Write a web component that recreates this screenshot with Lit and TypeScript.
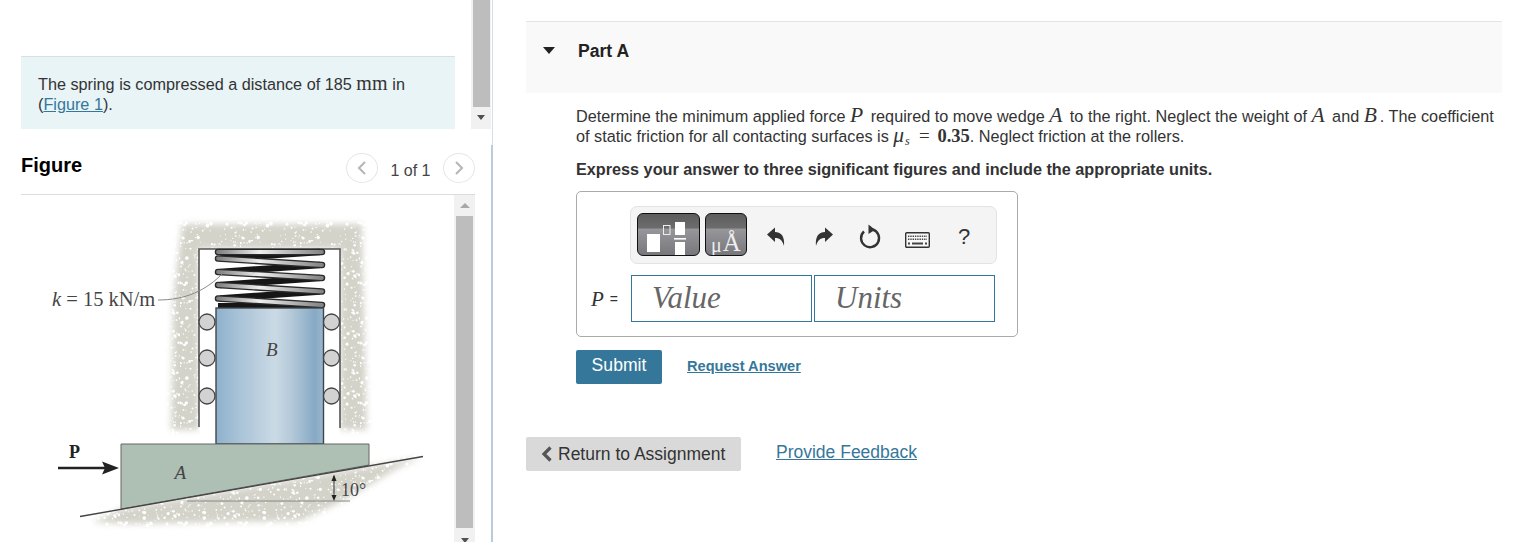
import { LitElement, html, css, svg } from "lit";
import { customElement } from "lit/decorators.js";

function makeDots() {
  let seed = 12345;
  const r = () => {
    seed = (seed * 16807) % 2147483647;
    return seed / 2147483647;
  };
  const out: { x: number; y: number; r: number }[] = [];
  for (let i = 0; i < 150; i++) {
    out.push({ x: +(r() * 60).toFixed(1), y: +(r() * 60).toFixed(1), r: +(0.5 + r() * r() * 1.5).toFixed(2) });
  }
  return out;
}
const DOTS = makeDots();
const ROLLER_Y = [322, 358, 396];
const BARS = [
  [218, 252, 322, 252],
  [218, 258.5, 322, 265],
  [218, 272, 322, 278],
  [218, 285, 322, 291.5],
  [218, 298.5, 322, 305],
];
const BACK = [
  [220, 258.5, 320, 252],
  [220, 272, 320, 265],
  [220, 285, 320, 278],
  [220, 298.5, 320, 291.5],
];

@customElement("app-root")
export class AppRoot extends LitElement {
  static styles = css`
    :host {
      display: block;
      width: 1516px;
      height: 542px;
      overflow: hidden;
      background: #fff;
      font-family: "Liberation Sans", Arial, sans-serif;
      font-size: 16.23px;
      line-height: 20px;
      color: #333;
    }
    .page { display: flex; height: 542px; }
    .left { width: 493px; flex: none; display: flex; flex-direction: column; }
    .top-pane {
      height: 145px;
      flex: none;
      display: flex;
      align-items: flex-start;
      border-right: 1px solid #d6e0ea;
      box-sizing: border-box;
    }
    .top-content { width: 471px; flex: none; padding: 56px 0 0 21px; box-sizing: border-box; }
    .prompt {
      width: 434px;
      height: 73px;
      box-sizing: border-box;
      background: #e9f4f7;
      border-top: 1px solid #d9dfe2;
      padding: 17px 17px 0;
    }
    a { color: #35779a; text-decoration: underline; }
    .mm { font-family: "Liberation Serif", "Times New Roman", serif; font-size: 20px; line-height: 0; letter-spacing: 0.2px; }
    .sb {
      background: #f1f1f1;
      display: flex;
      flex-direction: column;
      align-items: center;
      box-sizing: border-box;
    }
    .sb-top { width: 20px; height: 129px; flex: none; }
    .sb-top .thumb { width: 17px; height: 107px; background: #bdbdbd; flex: none; }
    .sb-arrow-down { width: 0; height: 0; border-left: 4.5px solid transparent; border-right: 4.5px solid transparent; border-top: 5px solid #505050; }
    .sb-arrow-up { width: 0; height: 0; border-left: 5px solid transparent; border-right: 5px solid transparent; border-bottom: 5px solid #a8a8a8; }
    .sb-top .sb-arrow-down { margin-top: 8px; }

    .fig-pane {
      flex: 1;
      border-right: 2px solid #b9cbdf;
      box-sizing: border-box;
      padding-left: 21px;
      display: flex;
      flex-direction: column;
      min-height: 0;
    }
    .fig-head {
      width: 454px;
      height: 50px;
      flex: none;
      box-sizing: border-box;
      border-bottom: 1px solid #dcdcdc;
      display: flex;
      align-items: flex-start;
      padding-top: 8px;
    }
    .fig-title { font-size: 20px; font-weight: bold; color: #000; line-height: 24px; flex: 1; }
    .circle {
      width: 32px;
      height: 30px;
      box-sizing: border-box;
      border: 1px solid #e6e6e6;
      border-radius: 50%;
      display: flex;
      align-items: center;
      justify-content: center;
      background: #fff;
      flex: none;
    }
    .circle svg { display: block; }
    .pager-text { width: 65px; text-align: center; line-height: 20px; margin-top: 8px; color: #444; flex: none; font-size: 16px; }
    .fig-body { display: flex; width: 454px; flex: 1; min-height: 0; }
    .fig-svg { width: 433px; height: 347px; display: block; flex: none; }
    .sb-fig { width: 21px; height: 347px; flex: none; }
    .sb-fig .sb-arrow-up { margin-top: 8px; }
    .sb-fig .thumb { width: 17px; height: 312px; background: #bdbdbd; margin-top: 8px; flex: none; }
    .sb-fig .sb-arrow-down { margin-top: 10px; }

    .fl-a { font: italic 19px "Liberation Serif", serif; fill: #444; }
    .fl-k { font: 20.5px "Liberation Serif", serif; fill: #444; }
    .fl-ki { font-style: italic; }
    .fl-p { font: bold 18px "Liberation Serif", serif; fill: #222; }
    .fl-d { font: 18px "Liberation Serif", serif; fill: #444; }

    .right { margin-left: 33px; width: 976px; flex: none; }
    .part-head {
      margin-top: 21px;
      height: 72px;
      box-sizing: border-box;
      background: #f9f9f9;
      border-top: 1px solid #e3e3e3;
      display: flex;
      align-items: flex-start;
      padding: 18px 0 0 17px;
    }
    .tri { width: 0; height: 0; border-left: 6.5px solid transparent; border-right: 6.5px solid transparent; border-top: 7px solid #222; margin-top: 7px; }
    .part-title { font-weight: bold; color: #222; margin-left: 23px; font-size: 17.6px; line-height: 22px; }
    .body { padding-left: 50px; }
    .desc { margin: 13px 0 0; width: 922px; }
    .mi { font-family: "Liberation Serif", serif; font-style: italic; font-size: 21.5px; line-height: 0; letter-spacing: 3px; color: #333; }
    .mu-sym { letter-spacing: 1px; }
    .mn { font-family: "Liberation Serif", serif; font-size: 19px; line-height: 0; color: #333; }
    .num { margin-left: 3px; font-weight: bold; font-size: 18.5px; }
    .sub { font-size: 12px; font-style: italic; font-family: "Liberation Serif", serif; vertical-align: -3px; line-height: 0; }
    .express { margin: 13px 0 0; font-weight: bold; }
    .answer {
      margin-top: 12px;
      width: 442px;
      height: 146px;
      box-sizing: border-box;
      border: 1px solid #aaa;
      border-radius: 5px;
      padding: 14px 0 0 53px;
    }
    .toolbar {
      width: 367px;
      height: 58px;
      box-sizing: border-box;
      background: #f4f4f4;
      border: 1px solid #e3e3e3;
      border-radius: 7px;
      display: flex;
      align-items: flex-start;
      padding-top: 6px;
      padding-left: 6px;
    }
    .tbtn {
      height: 43px;
      box-sizing: border-box;
      border: 1px solid #111;
      border-radius: 6px;
      background: linear-gradient(#5d5d5d 0, #6c6c6c 14px, #96969b 15px, #77777c 100%);
      overflow: hidden;
      flex: none;
    }
    .tbtn svg { display: block; }
    .t1 { width: 63px; }
    .t2 {
      width: 42px;
      margin-left: 5px;
      color: #eee;
      font-family: "Liberation Serif", serif;
      display: flex;
      align-items: flex-end;
      justify-content: center;
      gap: 1px;
      line-height: 1;
      white-space: nowrap;
    }
    .t2 .mu { font-size: 20px; line-height: 20px; }
    .t2 .ang { font-size: 25px; line-height: 25px; }
    .ico { flex: none; display: block; }
    .undo { margin: 13px 0 0 19px; }
    .redo { margin: 13px 0 0 28px; }
    .reset { margin: 11px 0 0 24px; }
    .kbd { margin: 19px 0 0 23px; }
    .help { margin: 9px 0 0 28px; font-size: 22px; line-height: 30px; color: #333; }
    .inputs { display: flex; align-items: flex-start; margin-top: 11px; margin-left: -53px; }
    .plabel { width: 54px; height: 47px; flex: none; display: flex; align-items: center; padding-left: 14px; box-sizing: border-box; font-size: 14px; gap: 6px; color: #333; }
    .plabel .mi { font-size: 21px; line-height: 20px; letter-spacing: 0; }
    .field {
      width: 181px;
      height: 47px;
      box-sizing: border-box;
      border: 1px solid #35779a;
      font: italic 31px/44px "Liberation Serif", serif;
      color: #666;
      padding-left: 20px;
      flex: none;
    }
    .field + .field { margin-left: 2px; }
    .actions { display: flex; align-items: flex-start; margin-top: 13px; }
    .submit {
      width: 86px;
      height: 34px;
      background: #35779a;
      color: #fff;
      border-radius: 2px;
      text-align: center;
      line-height: 31px;
      font-size: 17.6px;
      flex: none;
    }
    .req { margin: 6px 0 0 25px; font-weight: bold; font-size: 14.6px; }
    .footer { display: flex; align-items: flex-start; margin-top: 53px; }
    .ret {
      width: 215px;
      height: 34px;
      box-sizing: border-box;
      background: #d9d9d9;
      border-radius: 2px;
      display: flex;
      align-items: center;
      padding-left: 15px;
      gap: 5px;
      font-size: 17.5px;
      color: #333;
      flex: none;
    }
    .fb { margin: 5px 0 0 35px; font-size: 17.5px; }
  `;

  private figure() {
    const pts = DOTS.map((d) => svg`<circle cx=${d.x} cy=${d.y} r=${d.r} fill="#fff"></circle>`);
    return html`<svg class="fig-svg" viewBox="21 195 433 347">
      <defs>
        <pattern id="st" width="60" height="60" patternUnits="userSpaceOnUse">
          <rect width="60" height="60" fill="#d4d3ca"></rect>
          ${pts}
        </pattern>
        <filter id="bl" x="-20%" y="-20%" width="140%" height="140%"><feGaussianBlur stdDeviation="3"></feGaussianBlur></filter>
        <filter id="sf" x="-5%" y="-5%" width="110%" height="110%"><feGaussianBlur stdDeviation="0.45"></feGaussianBlur></filter>
        <mask id="gm" maskUnits="userSpaceOnUse" x="21" y="195" width="433" height="347">
          <g fill="#fff" filter="url(#bl)">
            <polygon points="182,224 362,224 367,430 340,430 340,249 199,249 199,430 171,430 173,300"></polygon>
            <polygon points="92,522 121,509 423,457 398,468 345,500 300,521 130,524"></polygon>
          </g>
        </mask>
        <linearGradient id="bg" x1="0" x2="1" y1="0" y2="0">
          <stop offset="0" stop-color="#8fb1cc"></stop>
          <stop offset="0.22" stop-color="#a9c3d8"></stop>
          <stop offset="0.55" stop-color="#cbdae5"></stop>
          <stop offset="0.7" stop-color="#b4c9d9"></stop>
          <stop offset="0.92" stop-color="#87a9c5"></stop>
          <stop offset="1" stop-color="#9ab8cf"></stop>
        </linearGradient>
        <linearGradient id="cg" gradientUnits="userSpaceOnUse" x1="218" x2="322" y1="0" y2="0">
          <stop offset="0" stop-color="#808080"></stop>
          <stop offset="0.4" stop-color="#efefef"></stop>
          <stop offset="0.62" stop-color="#c6c6c6"></stop>
          <stop offset="1" stop-color="#848484"></stop>
        </linearGradient>
      </defs>
      <rect x="21" y="195" width="433" height="347" fill="url(#st)" mask="url(#gm)"></rect>
      <g filter="url(#sf)">
        <path d="M199 427V249H340V428" fill="#fff" stroke="#555" stroke-width="1.6"></path>
        <rect x="200" y="250" width="139" height="194" fill="#fff"></rect>
        ${BACK.map((b) => svg`<line x1=${b[0]} y1=${b[1]} x2=${b[2]} y2=${b[3]} stroke="#181818" stroke-width="6.5"></line>`)}
        <rect x="218" y="303" width="104" height="6" fill="#181818"></rect>
        ${BARS.map((b) => svg`
          <line x1=${b[0]} y1=${b[1]} x2=${b[2]} y2=${b[3] + 0.01} stroke="#2a2a2a" stroke-width="6.5" stroke-linecap="round"></line>
          <line x1=${b[0]} y1=${b[1]} x2=${b[2]} y2=${b[3] + 0.01} stroke="url(#cg)" stroke-width="3.8" stroke-linecap="round"></line>
        `)}
        <rect x="216" y="308" width="107.5" height="136" fill="url(#bg)" stroke="#3f4548" stroke-width="1.4"></rect>
        ${ROLLER_Y.map((y) => svg`
          <circle cx="207" cy=${y} r="8" fill="#d2d2d2" stroke="#444" stroke-width="1.3"></circle>
          <circle cx="331.5" cy=${y} r="8" fill="#d2d2d2" stroke="#444" stroke-width="1.3"></circle>
        `)}
        <line x1="187" y1="501" x2="350" y2="501" stroke="#888" stroke-width="1"></line>
        <polygon points="121,444 369,444 369,465 121,509" fill="#aebfb4" stroke="#666" stroke-width="1"></polygon>
        <line x1="80" y1="516.5" x2="423" y2="456.5" stroke="#444" stroke-width="1.3"></line>
        <path d="M334 476V499" stroke="#333" stroke-width="1"></path>
        <path d="M331.5 481L334 474.5L336.5 481ZM331.5 495L334 501L336.5 495Z" fill="#222"></path>
        <path d="M158 300C185 300 206 291 224 272" fill="none" stroke="#888" stroke-width="1"></path>
        <path d="M58 468H108" stroke="#222" stroke-width="2.4"></path>
        <path d="M102 461.5L119 468L102 474.5L105 468Z" fill="#222"></path>
      </g>
      <text class="fl-a" x="174.5" y="479">A</text>
      <text class="fl-a" x="266" y="356">B</text>
      <text class="fl-p" x="69" y="458">P</text>
      <text class="fl-k" x="52" y="306"><tspan class="fl-ki">k</tspan> = 15 kN/m</text>
      <text class="fl-d" x="341" y="496">10°</text>
    </svg>`;
  }

  render() {
    return html`<div class="page">
      <div class="left">
        <div class="top-pane">
          <div class="top-content">
            <div class="prompt">The spring is compressed a distance of 185 <span class="mm">mm</span> in (<a>Figure 1</a>).</div>
          </div>
          <div class="sb sb-top"><div class="thumb"></div><div class="sb-arrow-down"></div></div>
        </div>
        <div class="fig-pane">
          <div class="fig-head">
            <div class="fig-title">Figure</div>
            <div class="circle"><svg width="12" height="16" viewBox="0 0 12 16"><path d="M9 2L3 8L9 14" fill="none" stroke="#b5b5b5" stroke-width="2"></path></svg></div>
            <div class="pager-text">1 of 1</div>
            <div class="circle"><svg width="12" height="16" viewBox="0 0 12 16"><path d="M3 2L9 8L3 14" fill="none" stroke="#b5b5b5" stroke-width="2"></path></svg></div>
          </div>
          <div class="fig-body">
            ${this.figure()}
            <div class="sb sb-fig"><div class="sb-arrow-up"></div><div class="thumb"></div><div class="sb-arrow-down"></div></div>
          </div>
        </div>
      </div>
      <div class="right">
        <div class="part-head"><div class="tri"></div><div class="part-title">Part A</div></div>
        <div class="body">
          <p class="desc">Determine the minimum applied force <span class="mi">P</span> required to move wedge <span class="mi">A</span> to the right. Neglect the weight of <span class="mi">A</span> and <span class="mi">B</span>. The coefficient of static friction for all contacting surfaces is <span class="mi mu-sym">μ</span><span class="sub">s</span> <span class="mn">&nbsp;=</span><span class="mn num">&nbsp;0.35</span>. Neglect friction at the rollers.</p>
          <p class="express">Express your answer to three significant figures and include the appropriate units.</p>
          <div class="answer">
            <div class="toolbar">
              <div class="tbtn t1"><svg width="61" height="41" viewBox="0 0 61 41">
                <rect x="9" y="20" width="13" height="18" fill="#fff"></rect>
                <rect x="25.5" y="11.5" width="6.5" height="9" fill="none" stroke="#eee" stroke-width="1"></rect>
                <rect x="37" y="8" width="10" height="13" fill="#fff"></rect>
                <rect x="36" y="24" width="12" height="1.6" fill="#fff"></rect>
                <rect x="37" y="28" width="10" height="13" fill="#fff"></rect>
              </svg></div>
              <div class="tbtn t2"><span class="mu">μ</span><span class="ang">Å</span></div>
              <svg class="ico undo" width="20" height="22" viewBox="0 0 20 22"><path d="M1 8.5L9 1.5V6C14.5 6 19 9.5 18 20C16.5 14.5 14 12 9 12V16Z" fill="#333"></path></svg>
              <svg class="ico redo" width="20" height="22" viewBox="0 0 20 22"><path d="M19 8.5L11 1.5V6C5.5 6 1 9.5 2 20C3.5 14.5 6 12 11 12V16Z" fill="#333"></path></svg>
              <svg class="ico reset" width="24" height="26" viewBox="0 0 24 26"><path d="M14.5 5.5A9 9 0 1 1 6 7.5" fill="none" stroke="#333" stroke-width="2.4"></path><path d="M10.5 0.5L17 5.8L10.5 10Z" fill="#333"></path></svg>
              <svg class="ico kbd" width="25" height="16" viewBox="0 0 25 16">
                <rect x="0.7" y="0.7" width="23.6" height="14.6" rx="1" fill="#f8f8f8" stroke="#333" stroke-width="1.4"></rect>
                <path d="M3 4.2H22M3 7.2H22" stroke="#444" stroke-width="1.6" stroke-dasharray="1.4 0.9"></path>
                <path d="M3 11.5H5M7 11.5H18M20 11.5H22" stroke="#444" stroke-width="1.8"></path>
              </svg>
              <div class="help">?</div>
            </div>
            <div class="inputs">
              <div class="plabel"><span class="mi">P</span><span>=</span></div>
              <div class="field">Value</div>
              <div class="field">Units</div>
            </div>
          </div>
          <div class="actions">
            <div class="submit">Submit</div>
            <a class="req">Request Answer</a>
          </div>
        </div>
        <div class="footer">
          <div class="ret"><svg width="12" height="16" viewBox="0 0 12 16"><path d="M9.5 1.5L3 8L9.5 14.5" fill="none" stroke="#555" stroke-width="3.2"></path></svg><span>Return to Assignment</span></div>
          <a class="fb">Provide Feedback</a>
        </div>
      </div>
    </div>`;
  }
}
